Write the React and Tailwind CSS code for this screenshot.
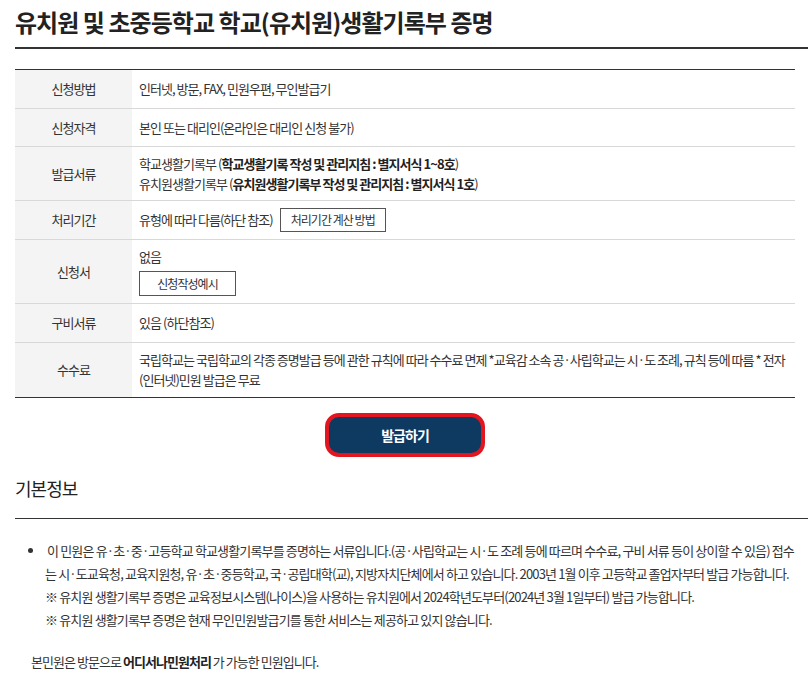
const rows = [
  { label: "신청방법", h: "h-[39px]", body: <span>인터넷, 방문, FAX, 민원우편, 무인발급기</span> },
  { label: "신청자격", h: "h-[38px]", body: <span>본인 또는 대리인(온라인은 대리인 신청 불가)</span> },
  {
    label: "발급서류",
    h: "h-[54px]",
    body: (
      <div className="leading-[20px]">
        <p>
          학교생활기록부 (<b className="font-bold text-[#222]">학교생활기록 작성 및 관리지침 : 별지서식 1~8호</b>)
        </p>
        <p>
          유치원생활기록부 (<b className="font-bold text-[#222]">유치원생활기록부 작성 및 관리지침 : 별지서식 1호</b>)
        </p>
      </div>
    ),
  },
  {
    label: "처리기간",
    h: "h-[39px]",
    body: (
      <div className="flex items-center gap-[7px]">
        <span>유형에 따라 다름(하단 참조)</span>
        <button className="h-[24px] w-[106px] border border-[#555] text-[12px] text-[#333]">
          처리기간 계산 방법
        </button>
      </div>
    ),
  },
  {
    label: "신청서",
    h: "h-[64px]",
    body: (
      <div className="flex flex-col items-start gap-[4px]">
        <span className="leading-[20px]">없음</span>
        <button className="h-[25px] w-[97px] border border-[#555] text-[12px] text-[#333]">
          신청작성예시
        </button>
      </div>
    ),
  },
  { label: "구비서류", h: "h-[39px]", body: <span>있음 (하단참조)</span> },
  {
    label: "수수료",
    h: "h-[55px]",
    last: true,
    body: (
      <p className="leading-[20px]">
        국립학교는 국립학교의 각종 증명발급 등에 관한 규칙에 따라 수수료 면제 *교육감 소속 공·사립학교는 시·도 조례, 규칙 등에 따름 * 전자
        <br />
        (인터넷)민원 발급은 무료
      </p>
    ),
  },
];

export default function App() {
  return (
    <div className="w-[808px] h-[674px] overflow-hidden bg-white pl-[15px] font-['Noto_Sans_CJK_KR',sans-serif] text-[#333] tracking-[-0.06em]">
      <h1 className="pt-[6px] pb-[9px] text-[24px] leading-[32px] font-bold tracking-[-0.04em] text-[#222] border-b-2 border-[#333]">
        유치원 및 초중등학교 학교(유치원)생활기록부 증명
      </h1>

      <div className="mt-[20px] w-[780px] border-t border-[#333] text-[13px]">
        {rows.map((r) => (
          <div
            key={r.label}
            className={`flex ${r.h} border-b ${r.last ? "border-[#333]" : "border-[#d8d8d8]"}`}
          >
            <div className="flex w-[117px] shrink-0 items-center justify-center bg-[#f4f4f4] text-[#333]">
              {r.label}
            </div>
            <div className="flex flex-1 items-center px-[7px] text-[#333]">{r.body}</div>
          </div>
        ))}
      </div>

      <div className="mt-[15px] flex w-[780px] justify-center">
        <button className="h-[44px] w-[160px] rounded-[14px] border-4 border-[#e3161f] bg-[#0e3a62] text-[14px] font-bold text-white">
          발급하기
        </button>
      </div>

      <h2 className="mt-[19px] pb-[18px] text-[18px] leading-[24px] text-[#222] border-b border-[#333]">
        기본정보
      </h2>

      <ul className="mt-[20px] list-disc pl-[30px] text-[13px] leading-[23px] tracking-[-0.065em] text-[#333]">
        <li>
          &nbsp;이 민원은 유·초·중·고등학교 학교생활기록부를 증명하는 서류입니다.(공·사립학교는 시·도 조례 등에 따르며 수수료, 구비 서류 등이 상이할 수 있음) 접수
          <br />
          는 시·도교육청, 교육지원청, 유·초·중등학교, 국·공립대학(교), 지방자치단체에서 하고 있습니다. 2003년 1월 이후 고등학교 졸업자부터 발급 가능합니다.
          <br />
          ※ 유치원 생활기록부 증명은 교육정보시스템(나이스)을 사용하는 유치원에서 2024학년도부터(2024년 3월 1일부터) 발급 가능합니다.
          <br />
          ※ 유치원 생활기록부 증명은 현재 무인민원발급기를 통한 서비스는 제공하고 있지 않습니다.
        </li>
      </ul>

      <p className="mt-[19px] pl-[16px] text-[13px] leading-[23px] text-[#333]">
        본민원은 방문으로 <b className="font-bold text-[#222]">어디서나민원처리</b> 가 가능한 민원입니다.
      </p>
    </div>
  );
}
